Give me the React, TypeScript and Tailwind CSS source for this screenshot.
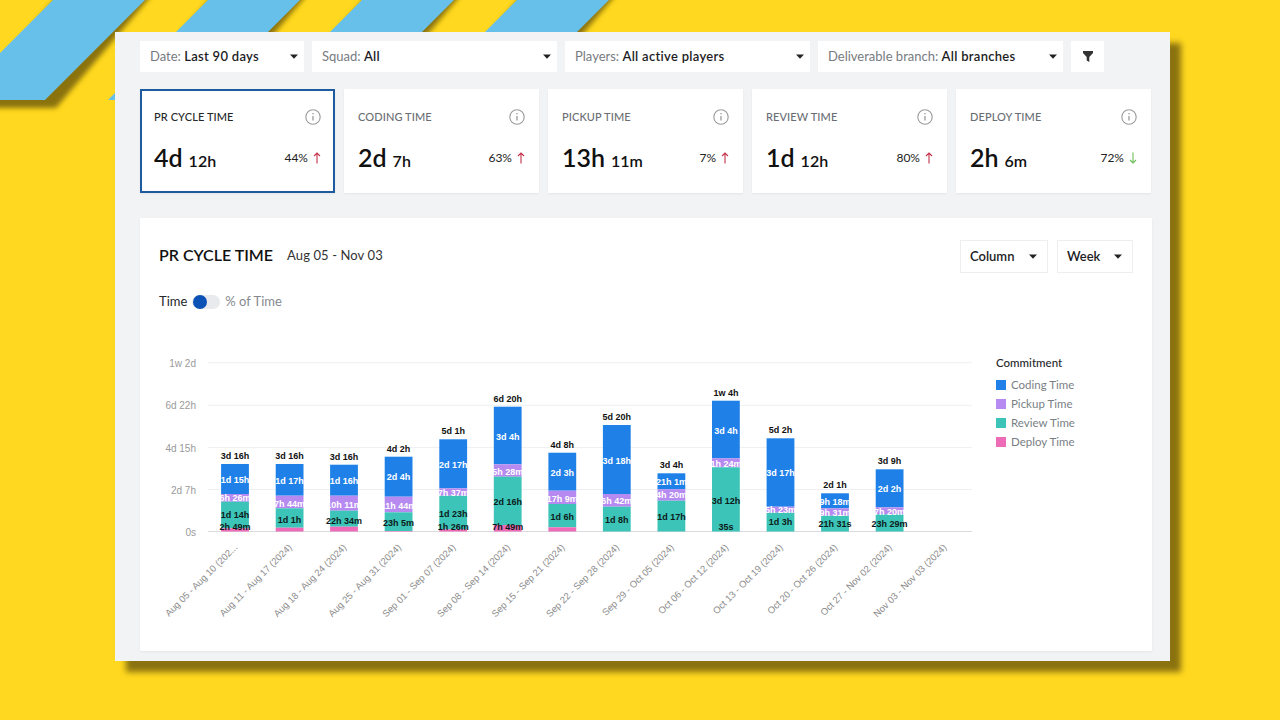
import React from "react";

const C = { blue: "#1f80e8", purple: "#b68af0", teal: "#3cc4b8", pink: "#ee6bb8" };

type Bar = { cx: number; top: number; total: string; stops: number[]; labels: [string, number, boolean][] };

const bars: Bar[] = [
  { cx: 235, top: 464, total: "3d 16h", stops: [494, 501.7, 528.3, 531.5], labels: [["1d 15h", 480, false], ["6h 26m", 497.7, false], ["1d 14h", 515, true], ["2h 49m", 526.7, true]] },
  { cx: 289.6, top: 464, total: "3d 16h", stops: [495.7, 508.3, 527.7, 531.5], labels: [["1d 17h", 480.7, false], ["7h 44m", 503.7, false], ["1d 1h", 520, true]] },
  { cx: 344, top: 464.7, total: "3d 16h", stops: [495.7, 510.7, 526.7, 531.5], labels: [["1d 16h", 481, false], ["10h 11m", 504.3, false], ["22h 34m", 520.3, true]] },
  { cx: 398.6, top: 456.7, total: "4d 2h", stops: [496.7, 512.3, 531, 531.5], labels: [["2d 4h", 477, false], ["11h 44m", 505.3, false], ["23h 5m", 522.3, true]] },
  { cx: 453.2, top: 439.3, total: "5d 1h", stops: [488.3, 495.7, 529.3, 531.5], labels: [["2d 17h", 465, false], ["7h 37m", 492.7, false], ["1d 23h", 513.7, true], ["1h 26m", 526.7, true]] },
  { cx: 507.7, top: 406.7, total: "6d 20h", stops: [464.3, 476.7, 525, 531.5], labels: [["3d 4h", 437, false], ["5h 28m", 471.7, false], ["2d 16h", 501.7, true], ["7h 49m", 526.7, true]] },
  { cx: 562.3, top: 452.7, total: "4d 8h", stops: [490.7, 504, 527.3, 531.5], labels: [["2d 3h", 472.7, false], ["17h 9m", 498.7, false], ["1d 6h", 516.7, true]] },
  { cx: 616.8, top: 425, total: "5d 20h", stops: [494, 506.7, 531.5, 531.5], labels: [["3d 18h", 461, false], ["6h 42m", 501, false], ["1d 8h", 520, true]] },
  { cx: 671.4, top: 473.3, total: "3d 4h", stops: [489.3, 500.7, 531.5, 531.5], labels: [["21h 1m", 482, false], ["4h 20m", 495, false], ["1d 17h", 516.7, true]] },
  { cx: 725.9, top: 400.7, total: "1w 4h", stops: [458.3, 467.3, 531.5, 531.5], labels: [["3d 4h", 430.7, false], ["1h 24m", 464, false], ["3d 12h", 500.3, true], ["35s", 527, true]] },
  { cx: 780.5, top: 438.3, total: "5d 2h", stops: [506.7, 512.7, 531.5, 531.5], labels: [["3d 17h", 473, false], ["5h 23m", 509.7, false], ["1d 3h", 521.7, true]] },
  { cx: 835, top: 493.3, total: "2d 1h", stops: [508.3, 515.7, 531.5, 531.5], labels: [["9h 18m", 501.7, false], ["9h 31m", 512.7, false], ["21h 31s", 524, true]] },
  { cx: 889.6, top: 469.3, total: "3d 9h", stops: [507.3, 514.3, 531.5, 531.5], labels: [["2d 2h", 489, false], ["7h 20m", 511.3, false], ["23h 29m", 523.3, true]] },
];

const xLabels = [
  "Aug 05 - Aug 10 (202...", "Aug 11 - Aug 17 (2024)", "Aug 18 - Aug 24 (2024)", "Aug 25 - Aug 31 (2024)",
  "Sep 01 - Sep 07 (2024)", "Sep 08 - Sep 14 (2024)", "Sep 15 - Sep 21 (2024)", "Sep 22 - Sep 28 (2024)",
  "Sep 29 - Oct 05 (2024)", "Oct 06 - Oct 12 (2024)", "Oct 13 - Oct 19 (2024)", "Oct 20 - Oct 26 (2024)",
  "Oct 27 - Nov 02 (2024)", "Nov 03 - Nov 03 (2024)",
];

const grid: [string, number][] = [["1w 2d", 362.7], ["6d 22h", 405.3], ["4d 15h", 447.6], ["2d 7h", 489.5], ["0s", 531.5]];

const stripes = [
  [53, 145],
  [208, 300],
  [362, 454],
  [517, 609],
];

function Caret() {
  return (
    <svg width="8" height="5" viewBox="0 0 8 5" className="shrink-0">
      <path d="M0 0.5h8L4 4.8z" fill="#222" />
    </svg>
  );
}

function Select({ label, value, width }: { label: string; value: string; width: string }) {
  return (
    <div className={`${width} h-[31px] bg-white flex items-center justify-between pl-[10px] pr-[6px] text-[13px]`}>
      <span>
        <span className="text-[#777b80]">{label}: </span>
        <span className="text-[#1d1d1f] font-semibold tracking-[0.3px]">{value}</span>
      </span>
      <Caret />
    </div>
  );
}

function Info() {
  return (
    <svg width="16" height="16" viewBox="0 0 16 16" fill="none" stroke="#9a9a9a" strokeWidth="1.1">
      <circle cx="8" cy="8" r="7.2" />
      <path d="M8 7v4.6" strokeWidth="1.3" />
      <circle cx="8" cy="4.7" r="0.8" fill="#9a9a9a" stroke="none" />
    </svg>
  );
}

function Arrow({ up, color }: { up: boolean; color: string }) {
  return (
    <svg width="8" height="12" viewBox="0 0 8 12" fill="none" stroke={color} strokeWidth="1.1" className={up ? "" : "rotate-180"}>
      <path d="M4 11.5V1M1 4l3-3 3 3" />
    </svg>
  );
}

function Card({ title, a, b, pct, up, active }: { title: string; a: string; b: string; pct: string; up: boolean; active?: boolean }) {
  return (
    <div className={`w-[195px] h-[104px] bg-white flex flex-col shadow-[0_1px_2px_rgba(0,0,0,0.06)] ${active ? "border-2 border-[#1d5a9e] pt-[18px] pl-[12px] pr-[12px]" : "pt-[20px] pl-[14px] pr-[14px]"}`}>
      <div className="flex items-center justify-between h-[16px]">
        <span className={`text-[11px] font-medium tracking-[0.1px] ${active ? "text-[#26282b]" : "text-[#6a6e73]"}`}>{title}</span>
        <Info />
      </div>
      <div className="flex items-center justify-between mt-[18px] h-[30px]">
        <span className="text-[#111] flex items-baseline">
          <span className="text-[25px] font-semibold">{a}</span>
          <span className="text-[16px] font-semibold ml-[6px]">{b}</span>
        </span>
        <span className="flex items-center gap-[5px] text-[12px] text-[#222] mb-[1px]">
          {pct}
          <Arrow up={up} color={up ? "#c4324a" : "#6cbf5a"} />
        </span>
      </div>
    </div>
  );
}

function BoxSelect({ label, width }: { label: string; width: string }) {
  return (
    <div className={`${width} h-[33px] border border-[#eceef0] flex items-center justify-between pl-[9px] pr-[10px] text-[13px] font-semibold text-[#1d1d1f]`}>
      {label}
      <Caret />
    </div>
  );
}

function Chart() {
  return (
    <svg width="845" height="300" viewBox="140 340 845 300" className="shrink-0">
      {grid.map(([t, y]) => (
        <g key={t}>
          <line x1="208" x2="972" y1={y} y2={y} stroke={t === "0s" ? "#d9dbde" : "#eeeff1"} strokeWidth="1" />
          <text x="196" y={y + 4} textAnchor="end" fontSize="10" fill="#9a9a9a" fontFamily="'Liberation Sans', sans-serif">{t}</text>
        </g>
      ))}
      {bars.map((b) => {
        const fills = [C.blue, C.purple, C.teal, C.pink];
        let prev = b.top;
        return (
          <g key={b.cx} fontFamily="'Liberation Sans', sans-serif" fontSize="9" fontWeight="700" textAnchor="middle">
            {b.stops.map((s, i) => {
              const r = <rect key={i} x={b.cx - 13.9} y={prev} width="27.8" height={Math.max(s - prev, 0)} fill={fills[i]} />;
              prev = s;
              return r;
            })}
            <text x={b.cx} y={b.top - 5} fill="#111">{b.total}</text>
            {b.labels.map(([t, y, dark], i) => (
              <text key={i} x={b.cx} y={y + 3.2} fill={dark ? "#0d1a1a" : "#fff"}>{t}</text>
            ))}
          </g>
        );
      })}
      {xLabels.map((t, i) => {
        const x = 235 + i * 54.55 + 3;
        const y = 548;
        return (
          <text key={t} x={x} y={y} textAnchor="end" fontSize="9.5" fill="#8c8c8c" fontFamily="'Liberation Sans', sans-serif" transform={`rotate(-45 ${x} ${y})`}>{t}</text>
        );
      })}
    </svg>
  );
}

const legend: [string, string][] = [
  ["Coding Time", C.blue],
  ["Pickup Time", C.purple],
  ["Review Time", C.teal],
  ["Deploy Time", C.pink],
];

export default function App() {
  return (
    <div className="relative w-[1280px] h-[720px] overflow-hidden bg-[#ffd81f] pt-[32px] pl-[115px] font-['Lato',sans-serif]">
      <svg className="absolute inset-0" width="1280" height="720" viewBox="0 0 1280 720">
        <defs>
          <filter id="soft" x="-20%" y="-20%" width="140%" height="140%">
            <feGaussianBlur stdDeviation="2.5" />
          </filter>
        </defs>
        {stripes.map(([l, r], i) => (
          <polygon key={i} points={`${l + 10},-10 ${r + 11},-10 ${r - 100 + 11},108 ${l - 100 + 10},108`} fill="#8a7210" filter="url(#soft)" />
        ))}
        {stripes.map(([l, r], i) => (
          <polygon key={i} points={`${l},0 ${r},0 ${r - 100},100 ${l - 100},100`} fill="#66c0ea" />
        ))}
      </svg>
      <div className="relative w-[1055px] h-[629px] bg-[#f1f3f5] shadow-[11px_11px_6px_#8a7210] pl-[25px] pr-[18px] pt-[9px]">
        <div className="flex gap-[8px]">
          <Select label="Date" value="Last 90 days" width="w-[164px]" />
          <Select label="Squad" value="All" width="w-[245px]" />
          <Select label="Players" value="All active players" width="w-[245px]" />
          <Select label="Deliverable branch" value="All branches" width="w-[245px]" />
          <div className="w-[33px] h-[31px] bg-white flex items-center justify-center">
            <svg width="10" height="11" viewBox="0 0 10 11">
              <path d="M0 0h10v2L6.3 6v5L3.7 9.5V6L0 2z" fill="#333" />
            </svg>
          </div>
        </div>
        <div className="flex gap-[9px] mt-[17px]">
          <Card active title="PR CYCLE TIME" a="4d" b="12h" pct="44%" up />
          <Card title="CODING TIME" a="2d" b="7h" pct="63%" up />
          <Card title="PICKUP TIME" a="13h" b="11m" pct="7%" up />
          <Card title="REVIEW TIME" a="1d" b="12h" pct="80%" up />
          <Card title="DEPLOY TIME" a="2h" b="6m" pct="72%" up={false} />
        </div>
        <div className="w-[1012px] h-[433px] bg-white mt-[25px] shadow-[0_1px_2px_rgba(0,0,0,0.06)]">
          <div className="flex items-center justify-between pl-[19px] pr-[19px] pt-[22px]">
            <div className="flex items-center gap-[14px] mb-[3px]">
              <span className="text-[16px] font-semibold text-[#111]">PR CYCLE TIME</span>
              <span className="text-[13px] text-[#333] mt-[1px] tracking-[0.1px]">Aug 05 - Nov 03</span>
            </div>
            <div className="flex gap-[9px]">
              <BoxSelect label="Column" width="w-[88px]" />
              <BoxSelect label="Week" width="w-[76px]" />
            </div>
          </div>
          <div className="flex items-center h-[20px] mt-[18px] pl-[19px] text-[13px] pt-[1px]">
            <span className="text-[#26282b]">Time</span>
            <div className="w-[28px] h-[14px] rounded-full bg-[#e8eaed] ml-[5px] mr-[5px] flex items-center pl-[1px]">
              <div className="w-[14px] h-[14px] rounded-full bg-[#0a52b5]" />
            </div>
            <span className="text-[#85898e]">% of Time</span>
          </div>
          <div className="flex mt-[29px]">
            <Chart />
            <div className="ml-[11px] pt-[16px]">
              <div className="text-[11.5px] leading-[14px] font-medium text-[#26282b]">Commitment</div>
              <div className="mt-[5px] flex flex-col">
                {legend.map(([t, c]) => (
                  <div key={t} className="flex items-center h-[19px] text-[11.5px] text-[#7a7f85]">
                    <div className="w-[10px] h-[10px] mr-[5px]" style={{ backgroundColor: c }} />
                    {t}
                  </div>
                ))}
              </div>
            </div>
          </div>
        </div>
      </div>
    </div>
  );
}
